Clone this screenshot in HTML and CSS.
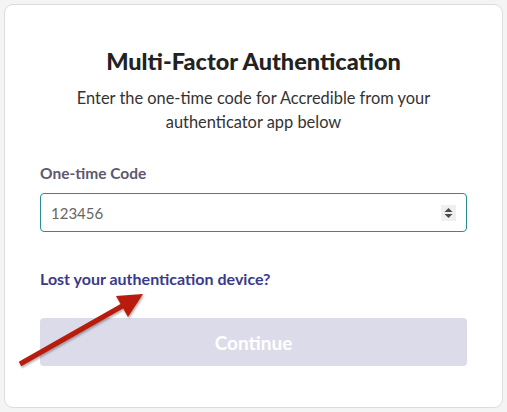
FILE: index.html
```html
<!DOCTYPE html>
<html lang="en">
<head>
<meta charset="utf-8">
<title>Multi-Factor Authentication</title>
<link rel="stylesheet" href="styles.css">
</head>
<body>
<div class="page">
  <div class="card">
    <h1 class="title">Multi-Factor Authentication</h1>
    <p class="subtitle">Enter the one-time code for Accredible from your<br>authenticator app below</p>
    <label class="label" for="code">One-time Code</label>
    <div class="input">
      <span class="value">123456</span>
      <span class="spinner">
        <svg width="9" height="12" viewBox="0 0 9 12"><path d="M4.5 1 L8.5 5 L0.5 5 Z" fill="#4a4a4a"/><path d="M0.5 7 L8.5 7 L4.5 11 Z" fill="#4a4a4a"/></svg>
      </span>
    </div>
    <a class="link" href="#">Lost your authentication device?</a>
    <button class="button" type="button">Continue</button>
  </div>
  <svg class="arrow" width="160" height="90" viewBox="0 0 160 90">
    <defs>
      <filter id="sh" x="-20%" y="-20%" width="140%" height="140%">
        <feDropShadow dx="1" dy="1.5" stdDeviation="1" flood-color="#000" flood-opacity="0.35"/>
      </filter>
    </defs>
    <g filter="url(#sh)">
      <line x1="20" y1="79" x2="124" y2="20" stroke="#b81c0a" stroke-width="5"/>
      <polygon points="116,11 143,9 128,32" fill="#b81c0a"/>
    </g>
  </svg>
</div>
</body>
</html>
```

FILE: styles.css
```css
html, body {
  margin: 0;
  padding: 0;
  background: #f4f4f4;
}
.page {
  position: relative;
  padding: 4px;
  height: 412px;
  box-sizing: border-box;
  font-family: "Lato", "Open Sans", sans-serif;
}
.card {
  box-sizing: border-box;
  width: 499px;
  height: 404px;
  background: #fff;
  border: 1px solid #dcdcdc;
  border-radius: 9px;
  padding: 40px 35px 0 35px;
  display: flex;
  flex-direction: column;
}
.title {
  margin: 0;
  text-align: center;
  font-size: 23.5px;
  line-height: 32px;
  font-weight: 900;
  color: #222;
}
.subtitle {
  margin: 9px 0 0;
  text-align: center;
  font-size: 16.4px;
  line-height: 24px;
  color: #333;
}
.label {
  margin-top: 29px;
  font-size: 15.5px;
  line-height: 20px;
  font-weight: 700;
  color: #5b5872;
}
.input {
  margin-top: 10px;
  box-sizing: border-box;
  height: 39px;
  border: 1px solid #2a8d96;
  border-radius: 4px;
  display: flex;
  align-items: center;
  justify-content: space-between;
  padding: 0 10px 0 10px;
}
.value {
  font-size: 15px;
  color: #666;
}
.spinner {
  width: 15px;
  height: 16px;
  background: #efefef;
  display: flex;
  align-items: center;
  justify-content: center;
}
.link {
  margin-top: 37px;
  font-size: 16px;
  line-height: 20px;
  font-weight: 700;
  color: #3a3a8c;
  text-decoration: none;
}
.button {
  margin-top: 29px;
  height: 48px;
  border: none;
  border-radius: 4px;
  background: #dcdbea;
  color: #fff;
  font-family: inherit;
  font-size: 19px;
  font-weight: 700;
}
.arrow {
  position: absolute;
  left: 0;
  top: 285px;
}
```
